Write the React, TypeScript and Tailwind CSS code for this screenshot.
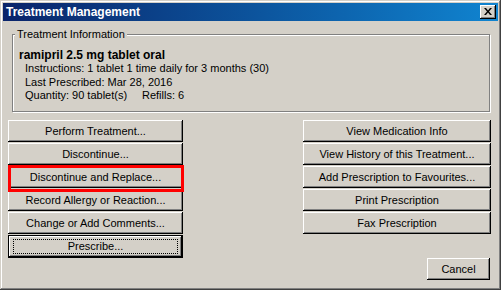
import React from 'react';

interface WinButtonProps {
  label: string;
  isDefault?: boolean;
  className?: string;
}

const bevel =
  'shadow-[inset_-1px_-1px_#000,inset_1px_1px_#fff,inset_-2px_-2px_#808080,inset_2px_2px_#d4d0c8]';

const WinButton: React.FC<WinButtonProps> = ({ label, isDefault = false, className = '' }) => {
  if (isDefault) {
    return (
      <div className={`relative h-[23px] border border-black bg-[#d4d0c8] ${className}`}>
        <div className={`flex h-full items-center justify-center ${bevel}`}>
          <span className="text-[11px] leading-none text-black">{label}</span>
        </div>
        <span className="pointer-events-none absolute left-[4px] right-[4px] top-[3px] bottom-[3px] border border-dotted border-black" />
      </div>
    );
  }
  return (
    <div className={`flex h-[22px] items-center justify-center bg-[#d4d0c8] ${bevel} ${className}`}>
      <span className="text-[11px] leading-none text-black">{label}</span>
    </div>
  );
};

const App: React.FC = () => {
  return (
    <div className="flex h-[290px] w-[501px] flex-col bg-[#d4d0c8] p-[3px] font-['Liberation_Sans',Arial,sans-serif] text-black shadow-[inset_-1px_-1px_#404040,inset_1px_1px_#d4d0c8,inset_-2px_-2px_#808080,inset_2px_2px_#fff]">
      {/* title bar */}
      <div className="flex h-[18px] items-center justify-between bg-linear-to-r from-[#0a246a] to-[#1084d0] pl-[3px] pr-[2px]">
        <span className="text-[12px] font-bold leading-none text-white">Treatment Management</span>
        <div className={`flex h-[14px] w-[16px] items-center justify-center bg-[#d4d0c8] ${bevel}`}>
          <svg width="8" height="7" viewBox="0 0 8 7" className="-mt-px">
            <path d="M0 0h2l2 2.5 2-2.5h2L5 3.5 8 7H6L4 4.5 2 7H0l3-3.5z" fill="#000" />
          </svg>
        </div>
      </div>

      <div className="flex flex-1 flex-col pl-[5px] pr-[7px]">
        <fieldset className="ml-[4px] mr-[1px] mt-[7px] h-[84px] border border-[#808080] shadow-[inset_1px_1px_#fff,1px_1px_#fff]">
          <legend className="ml-[2px] bg-[#d4d0c8] px-[2px] text-[11px] leading-[13px]">
            Treatment Information
          </legend>
          <div className="pt-[7px]">
            <div className="pl-[6px] text-[12px] font-bold leading-[14px]">ramipril 2.5 mg tablet oral</div>
            <div className="pl-[12px] text-[11px] leading-[13.5px]">
              <div>Instructions: 1 tablet 1 time daily for 3 months (30)</div>
              <div>Last Prescribed: Mar 28, 2016</div>
              <div className="flex">
                <span className="w-[117px]">Quantity: 90 tablet(s)</span>
                <span>Refills: 6</span>
              </div>
            </div>
          </div>
        </fieldset>

        <div className="mt-[8px] flex flex-1 justify-between">
          <div className="flex w-[175px] flex-col gap-px">
            <WinButton label="Perform Treatment..." />
            <WinButton label="Discontinue..." />
            <div className="relative">
              <WinButton label="Discontinue and Replace..." />
              <span className="pointer-events-none absolute -top-px -right-px -bottom-[4px] left-0 border-[3px] border-[#ff0000]" />
            </div>
            <WinButton label="Record Allergy or Reaction..." />
            <WinButton label="Change or Add Comments..." />
            <WinButton label="Prescribe..." isDefault />
          </div>

          <div className="flex w-[188px] flex-col gap-px">
            <WinButton label="View Medication Info" />
            <WinButton label="View History of this Treatment..." />
            <WinButton label="Add Prescription to Favourites..." />
            <WinButton label="Print Prescription" />
            <WinButton label="Fax Prescription" />
            <div className="mt-[23px] flex justify-end pr-px">
              <WinButton label="Cancel" className="w-[63px]" />
            </div>
          </div>
        </div>
      </div>
    </div>
  );
};

export default App;
